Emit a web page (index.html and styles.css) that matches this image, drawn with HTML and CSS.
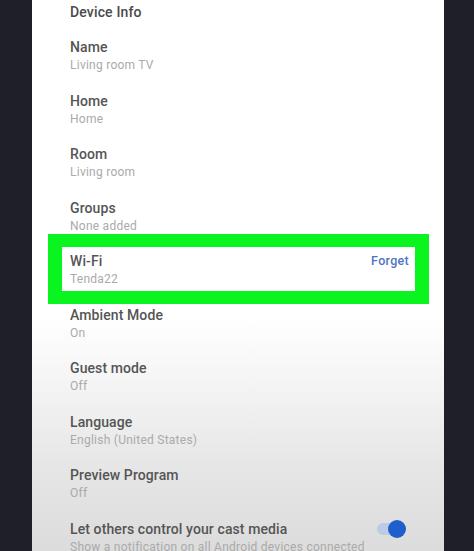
FILE: index.html
```html
<!DOCTYPE html>
<html>
<head>
    <meta charset="UTF-8">
    <title>Device Info</title>
    <link rel="stylesheet" href="styles.css">
</head>
<body>
    <div class="screen">
        <div class="panel">
            <div class="heading">Device Info</div>
            <div class="item">
                <div class="title">Name</div>
                <div class="sub">Living room TV</div>
            </div>
            <div class="item">
                <div class="title">Home</div>
                <div class="sub">Home</div>
            </div>
            <div class="item">
                <div class="title">Room</div>
                <div class="sub">Living room</div>
            </div>
            <div class="item">
                <div class="title">Groups</div>
                <div class="sub">None added</div>
            </div>
            <div class="item item_wifi">
                <div class="text">
                    <div class="title">Wi-Fi</div>
                    <div class="sub">Tenda22</div>
                </div>
                <a href="javascript:;" class="forget">Forget</a>
            </div>
            <div class="item">
                <div class="title">Ambient Mode</div>
                <div class="sub">On</div>
            </div>
            <div class="item">
                <div class="title">Guest mode</div>
                <div class="sub">Off</div>
            </div>
            <div class="item">
                <div class="title">Language</div>
                <div class="sub">English (United States)</div>
            </div>
            <div class="item">
                <div class="title">Preview Program</div>
                <div class="sub">Off</div>
            </div>
            <div class="item item_toggle">
                <div class="text">
                    <div class="title">Let others control your cast media</div>
                    <div class="sub">Show a notification on all Android devices connected</div>
                </div>
                <span class="switch"><span class="knob"></span></span>
            </div>
        </div>
    </div>
</body>
</html>
```

FILE: styles.css
```css
* {
    margin: 0;
    padding: 0;
}
a {
    text-decoration: none;
}
body {
    background: #1e1f28;
    font-family: Roboto, "Liberation Sans", sans-serif;
}
.screen {
    display: flex;
    height: 551px;
    overflow: hidden;
}
.panel {
    margin-left: 32px;
    width: 412px;
    height: 551px;
    padding: 3px 35px 0 38px;
    box-sizing: border-box;
    background: linear-gradient(#ffffff 0, #ffffff 58%, #e6e6e6 85%, #dcdcdc 100%);
    overflow: hidden;
}
.heading {
    font-size: 14px;
    font-weight: 500;
    line-height: 18px;
    letter-spacing: 0.15px;
    color: #4a4a4a;
    margin-bottom: 17px;
}
.item {
    margin-bottom: 17.5px;
}
.title {
    font-size: 14px;
    font-weight: 500;
    line-height: 18px;
    letter-spacing: 0.1px;
    color: #555;
}
.sub {
    font-size: 12px;
    line-height: 18px;
    letter-spacing: 0.25px;
    color: #aaa;
    white-space: nowrap;
}
.item_wifi {
    display: flex;
    justify-content: space-between;
    align-items: flex-start;
    margin: -18px -20px 1.5px -22px;
    padding: 5px 6px 3px 8px;
    border-style: solid;
    border-color: #0af51f;
    border-width: 13px 14px;
    background: #fff;
}
.forget {
    font-size: 12.5px;
    font-weight: 500;
    line-height: 18px;
    letter-spacing: 0.3px;
    color: #4c76c4;
}
.item_toggle {
    display: flex;
    justify-content: space-between;
    align-items: flex-start;
}
.switch {
    position: relative;
    display: block;
    width: 28px;
    height: 12px;
    margin: 3px 4px 0 0;
    border-radius: 6px;
    background: #bccbe6;
}
.knob {
    position: absolute;
    right: -1px;
    top: -3px;
    width: 18px;
    height: 18px;
    border-radius: 50%;
    background: #1f5fcc;
}
```
